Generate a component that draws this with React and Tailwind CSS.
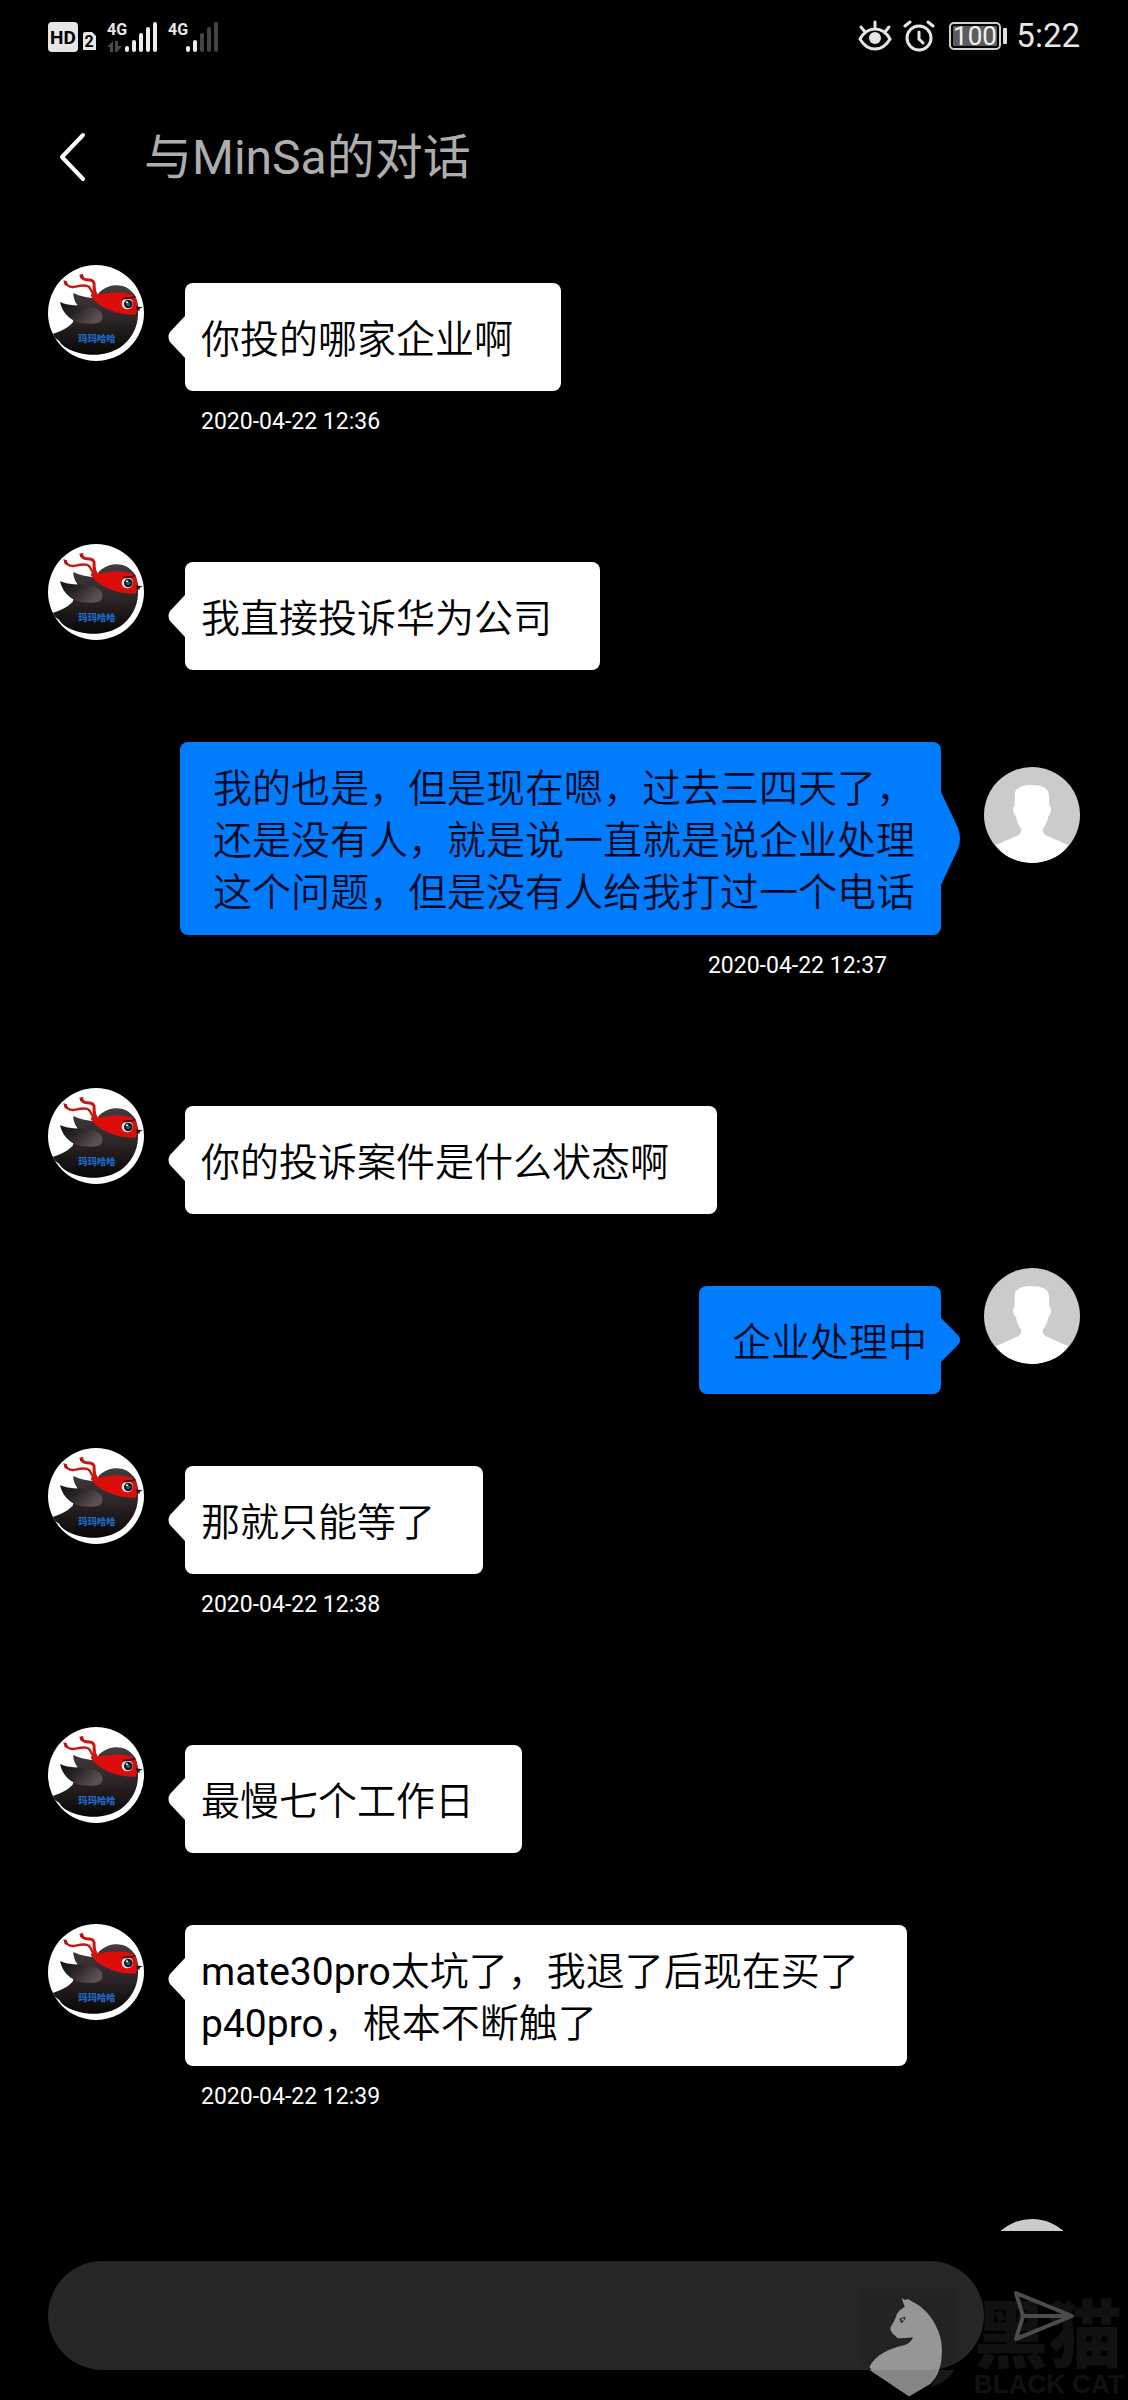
import React from "react";

const messages = [
  { side: "left", lines: ["你投的哪家企业啊"], time: "2020-04-22 12:36" },
  { side: "left", lines: ["我直接投诉华为公司"] },
  {
    side: "right",
    tall: true,
    lines: ["我的也是，但是现在嗯，过去三四天了，", "还是没有人，就是说一直就是说企业处理", "这个问题，但是没有人给我打过一个电话"],
    time: "2020-04-22 12:37",
  },
  { side: "left", lines: ["你的投诉案件是什么状态啊"] },
  { side: "right", lines: ["企业处理中"] },
  { side: "left", lines: ["那就只能等了"], time: "2020-04-22 12:38" },
  { side: "left", lines: ["最慢七个工作日"] },
  { side: "left", lines: ["mate30pro太坑了，我退了后现在买了", "p40pro，根本不断触了"], time: "2020-04-22 12:39" },
  { side: "right", lines: [] },
];

function BirdAvatar() {
  return (
    <svg viewBox="24 30 288 288" className="-mt-12 size-24 shrink-0 rounded-full bg-white" role="img" aria-label="MinSa">
      <defs>
        <linearGradient id="birdBody" x1="0" y1="0" x2="0" y2="1">
          <stop offset="0" stopColor="#453c3f" />
          <stop offset="0.5" stopColor="#2c2426" />
          <stop offset="1" stopColor="#080505" />
        </linearGradient>
        <linearGradient id="birdWing" x1="0" y1="0" x2="1" y2="0.5">
          <stop offset="0" stopColor="#120e0f" />
          <stop offset="0.5" stopColor="#2e2628" />
          <stop offset="1" stopColor="#5d5054" />
        </linearGradient>
      </defs>
      <path
        d="M178 112C205 84 258 80 284 120C291 132 293 145 294 153L294 165C296 205 284 240 250 270C212 302 155 304 118 294C88 286 66 274 58 258L30 238C58 233 84 218 98 203L112 150C104 139 99 126 100 114C120 124 146 128 166 130Z"
        fill="url(#birdBody)"
      />
      <path d="M60 141C84 153 116 150 146 154C174 158 192 174 187 192C182 209 150 208 122 204C92 198 68 176 60 141Z" fill="url(#birdWing)" />
      <path d="M158 112C164 118 172 120 184 118C218 110 262 110 284 124C294 140 296 168 286 179C252 182 212 170 186 154C170 144 160 134 152 122Z" fill="#dc0d0b" />
      <path d="M76 80C80 92 86 97 100 96C122 92 138 88 146 95C154 103 156 114 166 126" fill="none" stroke="#c21a17" strokeWidth="7" />
      <path d="M124 62C126 70 132 74 140 74C152 74 160 76 162 84C164 96 158 106 170 120" fill="none" stroke="#cf1512" strokeWidth="9" />
      <path d="M70 76L80 78L84 93L74 91ZM118 59L129 57L132 71L121 70Z" fill="#b31512" />
      <circle cx="262" cy="146" r="17" fill="#f0e6e4" />
      <circle cx="265" cy="147" r="13" fill="#14161b" />
      <circle cx="265" cy="148" r="6" fill="#35586b" />
      <circle cx="261" cy="142" r="3" fill="#fff" />
      <path d="M248 131C262 131 276 130 286 124" fill="none" stroke="#3c0a0a" strokeWidth="5" />
      <path d="M288 154L308 157L298 162L300 168L290 164Z" fill="#1b1414" />
      <text x="115" y="262" fontSize="28" fontWeight="900" fill="#1d68c4" fontFamily="'Noto Sans CJK SC', sans-serif">
        玛玛哈哈
      </text>
    </svg>
  );
}

function PersonAvatar() {
  return (
    <svg viewBox="0 0 288 288" className="-mt-12 size-24 shrink-0 rounded-full bg-[#cbcbcb]" role="img" aria-label="我">
      <path
        d="M92 82C92 64 114 54 143 54C174 54 194 64 195 84L196 116C204 120 202 138 193 148C190 166 184 176 176 186C176 198 180 202 192 208L252 234C236 268 190 288 144 288C98 288 56 268 36 234L96 208C108 203 112 198 112 186C104 176 98 164 96 148C86 138 84 122 92 116Z"
        fill="#fff"
      />
    </svg>
  );
}

/* Latin runs keep the regular weight, Chinese runs use the lighter one. */
function Line({ text }) {
  const runs = text.match(/[a-z0-9]+|[^a-z0-9]+/g);
  return (
    <p>
      {runs.map((run, i) =>
        /[a-z0-9]/.test(run) ? (
          <span key={i} className="font-normal">
            {run}
          </span>
        ) : (
          run
        )
      )}
    </p>
  );
}

function Message({ side, lines, time, tall }) {
  const body = lines.map((line) => <Line key={line} text={line} />);
  if (side === "left") {
    return (
      <li>
        <div className="flex items-center">
          <BirdAvatar />
          <svg viewBox="0 0 17 42" className="mt-[33px] ml-6 h-[42px] w-[17px] shrink-0 self-start" aria-hidden="true">
            <path d="M17 0V42L2 26Q-1 21 2 16Z" fill="#fff" />
          </svg>
          <div className="flex min-h-[108px] flex-col justify-center rounded-lg bg-white pt-[21px] pr-12 pb-4 pl-4">{body}</div>
        </div>
        {time && <time className="mt-[15px] mb-[52px] ml-[153px] block text-[23px] leading-8 font-normal text-white">{time}</time>}
      </li>
    );
  }
  return (
    <li>
      <div className="flex items-center justify-end">
        <div className="flex min-h-[108px] flex-col justify-center rounded-lg bg-[#007dff] pt-[21px] pr-[14px] pb-4 pl-[33px] text-[#000a24]">
          <div className={tall ? "pr-3" : ""}>{body}</div>
        </div>
        <svg
          viewBox="0 0 19 44"
          preserveAspectRatio="none"
          className={tall ? "mr-6 h-[93px] w-[19px] shrink-0" : "mr-6 h-11 w-[19px] shrink-0"}
          aria-hidden="true"
        >
          <path d="M0 0V44L17 27Q21 22 17 17Z" fill="#007dff" />
        </svg>
        <PersonAvatar />
      </div>
      {time && <time className="mt-[15px] mr-[193px] mb-[52px] block text-right text-[23px] leading-8 font-normal text-white">{time}</time>}
    </li>
  );
}

function Signal({ strong, arrows }) {
  const tops = [45, 39, 32, 26, 21];
  return (
    <svg viewBox="0 18 51 34" className="h-[34px] w-[51px]" role="img" aria-label="4G">
      <text x="0" y="34" fontSize="16" fontWeight="700" fill="#e8e8e8" fontFamily="'Roboto', sans-serif">4G</text>
      {arrows && <path d="M0 46L6 40V51H3V46ZM8 40H11V45H15L10 51H8Z" fill="#4a4a4a" />}
      {tops.map((top, i) => (
        <rect key={top} x={18 + i * 7} y={top} width="4" height={51 - top} rx="2" fill={i < strong ? "#ececec" : "#444"} />
      ))}
    </svg>
  );
}

function StatusBar() {
  return (
    <div className="flex h-[72px] items-center justify-between px-12">
      <div className="flex items-center gap-[10px]">
        <svg viewBox="47 21 49 31" className="h-[31px] w-[49px]" role="img" aria-label="HD 2">
          <rect x="47" y="22" width="30" height="30" rx="4" fill="#e6e6e6" />
          <text x="62" y="44" textAnchor="middle" fontSize="19" fontWeight="700" fill="#000" fontFamily="'Roboto', sans-serif">HD</text>
          <path d="M84 32H91L95 36V50H82V34Q82 32 84 32Z" fill="#e6e6e6" />
          <text x="88" y="47" textAnchor="middle" fontSize="16" fontWeight="700" fill="#000" fontFamily="'Roboto', sans-serif">2</text>
        </svg>
        <Signal strong={5} arrows />
        <Signal strong={2} />
      </div>
      <div className="flex items-center text-[#e6e6e6]">
        <svg viewBox="0 0 34 32" className="mr-[11px] h-8 w-[34px]" fill="none" stroke="currentColor" strokeWidth="3" strokeLinecap="round" aria-hidden="true">
          <path d="M2 19C6 12 11 9 17 9S28 12 32 19C28 26 23 29 17 29S6 26 2 19Z" />
          <path d="M17 2V8M3 7L7 12M31 7L27 12" />
          <circle cx="17" cy="18" r="6" fill="currentColor" stroke="none" />
        </svg>
        <svg viewBox="0 0 32 32" className="mr-[14px] size-8" fill="none" stroke="currentColor" strokeWidth="3" strokeLinecap="round" aria-hidden="true">
          <circle cx="16" cy="18" r="12" />
          <path d="M16 12V19L20 23M2 6L7 2M30 6L25 2" />
        </svg>
        <svg viewBox="0 0 59 28" className="mr-2 h-7 w-[59px]" role="img" aria-label="100">
          <rect x="1" y="1" width="50" height="26" rx="4" fill="none" stroke="#d0d0d0" strokeWidth="2" />
          <rect x="4" y="4" width="44" height="20" rx="1" fill="#5c5c5c" />
          <rect x="54" y="6" width="4" height="16" rx="1" fill="#e0e0e0" />
          <text x="26" y="23" textAnchor="middle" fontSize="26" fill="#f0f0f0" fontFamily="'Roboto', sans-serif">100</text>
        </svg>
        <span className="text-[33px] leading-10">5:22</span>
      </div>
    </div>
  );
}

function Watermark() {
  return (
    <div className="pointer-events-none absolute right-0 bottom-0 flex items-end" aria-hidden="true">
      <svg viewBox="90 260 345 340" className="h-[113px] w-[115px]">
        <path d="M95 265H385V500L305 562L240 590L95 490Z" fill="#000" opacity="0.08" />
        <path d="M330 510H376C362 535 340 552 306 560Z" fill="#191919" />
        <path
          d="M218 294L229 299L238 296L247 303C300 325 338 390 339 445C340 500 326 530 304 551L240 589L130 515L121 500C138 466 180 445 222 436C238 431 246 425 252 411C235 413 220 414 206 414C199 405 187 401 184 386C184 377 194 369 200 351C204 336 214 326 227 320Z"
          fill="#969696"
        />
        <path d="M121 510H325C316 532 310 545 304 551L240 589L130 515Z" fill="#858585" />
        <path d="M210 358Q218 349 229 350Q229 362 216 369Q216 362 210 358Z" fill="#222" />
        <circle cx="221" cy="358" r="4" fill="#969696" />
      </svg>
      <div className="w-[154px] text-[#121111]">
        <p className="font-['Noto_Sans_CJK_SC',sans-serif] text-[74px] leading-[76px] font-black whitespace-nowrap">黑猫</p>
        <p className="font-['Liberation_Sans',sans-serif] text-[26px] leading-8 font-bold whitespace-nowrap">BLACK CAT</p>
      </div>
    </div>
  );
}

export default function App() {
  return (
    <div className="relative flex h-screen flex-col overflow-hidden bg-black font-['Roboto','Noto_Sans_CJK_SC',sans-serif]">
      <StatusBar />
      <header className="flex h-[170px] shrink-0 items-start pt-[51px] pl-12">
        <button type="button" aria-label="返回" className="flex h-[68px] w-12 items-center justify-center">
          <svg viewBox="0 0 28 50" className="h-[50px] w-7" fill="none" stroke="#fff" strokeWidth="4" strokeLinecap="round" strokeLinejoin="round">
            <path d="M25 3L4 25L25 47" />
          </svg>
        </button>
        <h1 className="ml-12 text-[48px] leading-[70px] text-[#adadad]">与MinSa的对话</h1>
      </header>
      <main className="min-h-0 flex-1 overflow-hidden px-12 pt-[41px]">
        <ul className="flex flex-col gap-[72px] text-[39px] leading-[52px] font-[350] whitespace-nowrap text-black">
          {messages.map((message, i) => (
            <Message key={i} {...message} />
          ))}
        </ul>
      </main>
      <footer className="flex shrink-0 items-center py-[30px] pl-12">
        <input type="text" aria-label="消息" className="h-[109px] min-w-0 flex-1 rounded-full bg-[#262626] px-12 text-[39px] text-white outline-none" />
        <button type="button" aria-label="发送" className="relative z-10 flex h-[109px] w-36 shrink-0 items-center pl-[29px]">
          <svg viewBox="0 0 62 52" className="h-[52px] w-[62px]" fill="none" stroke="#4d4b4b" strokeWidth="4" strokeLinejoin="round">
            <path d="M3 3L59 26L3 49L10 26ZM10 26H59" />
          </svg>
        </button>
      </footer>
      <Watermark />
    </div>
  );
}
